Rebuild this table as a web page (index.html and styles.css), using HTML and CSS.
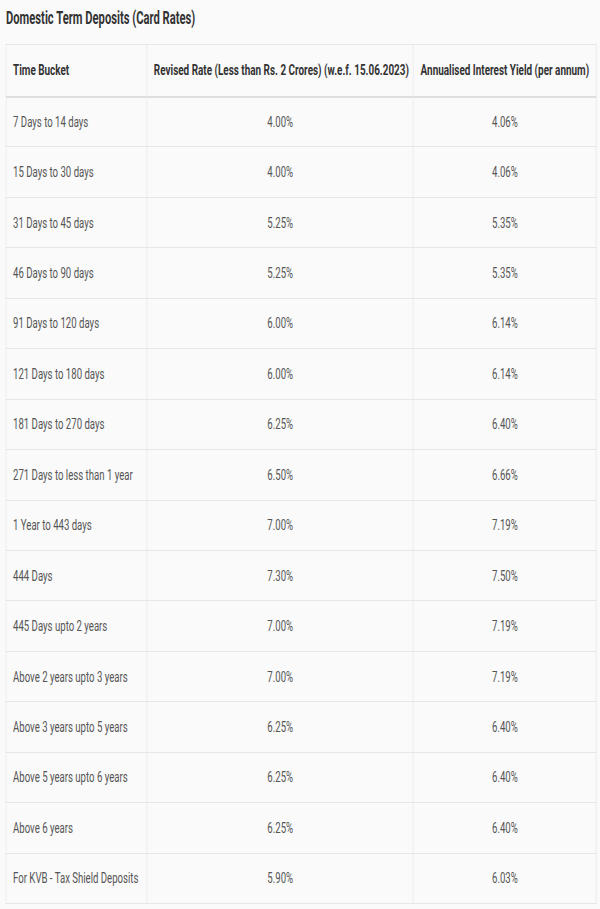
FILE: index.html
```html
<!DOCTYPE html>
<html>
<head>
<meta charset="utf-8">
<link rel="stylesheet" href="styles.css">
</head>
<body>
<div class="frame">
<div class="page">
  <h3 class="title">Domestic Term Deposits (Card Rates)</h3>
  <table class="rates">
    <colgroup><col class="c1"><col class="c2"><col class="c3"></colgroup>
    <thead>
      <tr><th>Time Bucket</th><th>Revised Rate (Less than Rs. 2 Crores) (w.e.f. 15.06.2023)</th><th>Annualised Interest Yield (per annum)</th></tr>
    </thead>
    <tbody>
      <tr><td>7 Days to 14 days</td><td>4.00%</td><td>4.06%</td></tr>
      <tr><td>15 Days to 30 days</td><td>4.00%</td><td>4.06%</td></tr>
      <tr><td>31 Days to 45 days</td><td>5.25%</td><td>5.35%</td></tr>
      <tr><td>46 Days to 90 days</td><td>5.25%</td><td>5.35%</td></tr>
      <tr><td>91 Days to 120 days</td><td>6.00%</td><td>6.14%</td></tr>
      <tr><td>121 Days to 180 days</td><td>6.00%</td><td>6.14%</td></tr>
      <tr><td>181 Days to 270 days</td><td>6.25%</td><td>6.40%</td></tr>
      <tr><td>271 Days to less than 1 year</td><td>6.50%</td><td>6.66%</td></tr>
      <tr><td>1 Year to 443 days</td><td>7.00%</td><td>7.19%</td></tr>
      <tr><td>444 Days</td><td>7.30%</td><td>7.50%</td></tr>
      <tr><td>445 Days upto 2 years</td><td>7.00%</td><td>7.19%</td></tr>
      <tr><td>Above 2 years upto 3 years</td><td>7.00%</td><td>7.19%</td></tr>
      <tr><td>Above 3 years upto 5 years</td><td>6.25%</td><td>6.40%</td></tr>
      <tr><td>Above 5 years upto 6 years</td><td>6.25%</td><td>6.40%</td></tr>
      <tr><td>Above 6 years</td><td>6.25%</td><td>6.40%</td></tr>
      <tr><td>For KVB - Tax Shield Deposits</td><td>5.90%</td><td>6.03%</td></tr>
    </tbody>
  </table>
</div>
</div>
</body>
</html>
```
FILE: styles.css
```css
html, body {
  margin: 0;
  padding: 0;
  background: #fafafa;
  overflow: hidden;
}
.frame {
  width: 600px;
  overflow: hidden;
}
/* The page is laid out wide and compressed horizontally to fit 600px */
.page {
  width: 936px;
  box-sizing: border-box;
  padding: 0 4.6px 0 9.4px;
  transform: scaleX(0.64);
  transform-origin: 0 0;
  font-family: Roboto, "Liberation Sans", sans-serif;
  color: #555;
}
.title {
  margin: 0;
  padding: 8px 0 0 0;
  height: 44px;
  box-sizing: border-box;
  font-size: 17.5px;
  line-height: 21px;
  font-weight: bold;
  color: #333;
}
.rates {
  width: 922px;
  table-layout: fixed;
  border-collapse: collapse;
  border: 1px solid #e2e2e2;
  font-size: 15px;
}
.c1 { width: 220px; }
.c2 { width: 416px; }
.c3 { width: 286px; }
.rates th, .rates td {
  border: 1px solid #e6e6e6;
  padding: 0 10px;
  height: 50.44px;
  box-sizing: border-box;
  white-space: nowrap;
}
.rates th {
  height: 52px;
  font-size: 15.5px;
  text-align: center;
  font-weight: bold;
  color: #333;
  border-bottom: 2px solid #dedede;
}
.rates th:first-child { text-align: left; }
.rates td { text-align: center; }
.rates td:first-child { text-align: left; }
```
